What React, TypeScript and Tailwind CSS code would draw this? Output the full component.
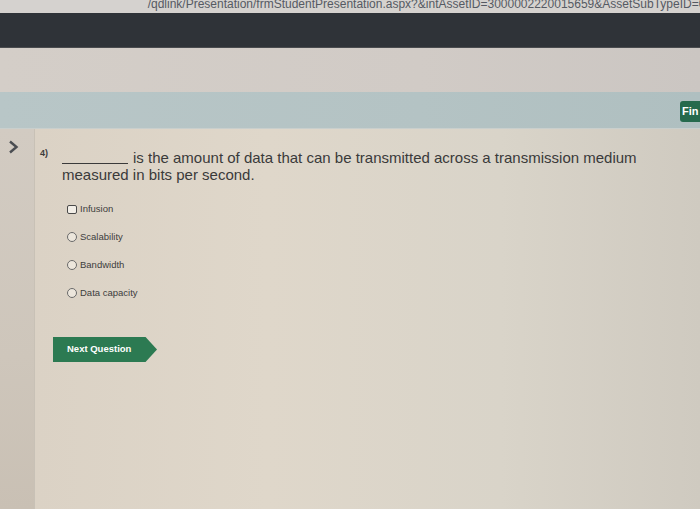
import React from 'react';

const options = [
  { label: 'Infusion', square: true },
  { label: 'Scalability', square: false },
  { label: 'Bandwidth', square: false },
  { label: 'Data capacity', square: false },
];

export default function App() {
  return (
    <div className="w-[700px] h-[509px] flex flex-col overflow-hidden font-['Liberation_Sans',Arial,sans-serif] bg-[#d8d1c6]">
      {/* address bar, cut off at the top edge of the photo */}
      <div className="h-[13px] shrink-0 overflow-hidden bg-[#d5d2cf] flex justify-end">
        <div className="-mt-[4px] text-[12px] leading-[16px] text-[#555a63] whitespace-nowrap mr-[-12px]">
          /qdlink/Presentation/frmStudentPresentation.aspx?&amp;intAssetID=3000002220015659&amp;AssetSubTypeID=08
        </div>
      </div>

      {/* dark header */}
      <div className="h-[35px] shrink-0 bg-[#2f3338] border-b border-[#4a4c4f]" />

      {/* light strip */}
      <div className="h-[44px] shrink-0 bg-[linear-gradient(90deg,#d4cec8,#d1cbc6_60%,#cbc6c2)]" />

      {/* title bar */}
      <div className="h-[37px] shrink-0 bg-[linear-gradient(90deg,#b8c6c7,#b4c3c4_60%,#afbfc0)] border-b border-[#c9cfcd] flex items-center justify-end">
        <div className="h-[21px] w-[20px] mt-[2px] rounded-l-[3px] bg-[#266a4d] text-white text-[11px] font-bold flex items-center pl-[2px] overflow-hidden whitespace-nowrap">
          Fin
        </div>
      </div>

      {/* body */}
      <div className="flex-1 flex min-h-0">
        <div className="w-[35px] shrink-0 bg-[linear-gradient(180deg,#d2cbc2,#cec6bb_60%,#c9c0b4)] border-r border-[#c8c1b6] pt-[11px] pl-[8px]">
          <svg width="11" height="14" viewBox="0 0 11 14" className="text-[#4a4d52]">
            <path d="M2 1.5 L8.5 7 L2 12.5" fill="none" stroke="currentColor" strokeWidth="2.4" strokeLinejoin="miter" />
          </svg>
        </div>

        <div className="flex-1 bg-[linear-gradient(90deg,#dbd2c5,#dfd7ca_35%,#d9d4c9_70%,#cfcac0)] pt-[20px]">
          <div className="flex">
            <div className="w-[27px] pl-[5px] -mt-[2px] text-[9px] font-bold text-[#3c3c3c]">4)</div>
            <div className="text-[15px] leading-[17px] text-[#3a3a3a]">
              <span className="inline-block w-[66px] border-b border-[#3a3a3a] align-[-1px] mr-[5px]" />
              is the amount of data that can be transmitted across a transmission medium
              <br />
              measured in bits per second.
            </div>
          </div>

          <div className="flex flex-col gap-[14px] pl-[32px] pt-[19px]">
            {options.map((o) => (
              <div key={o.label} className="flex items-center gap-[3px] h-[14px]">
                <span
                  className={
                    o.square
                      ? 'w-[10px] h-[9px] rounded-[2px] border-[1.5px] border-[#4a4a4a] bg-[#f2eee7]'
                      : 'w-[10px] h-[10px] rounded-full border border-[#6a6a6a] bg-[#ece6dc]'
                  }
                />
                <span className="text-[9.5px] text-[#3d3d3d]">{o.label}</span>
              </div>
            ))}
          </div>

          <div className="pl-[18px] pt-[37px]">
            <div className="w-[104px] h-[25px] bg-[#2c7a52] text-white text-[9.5px] font-bold flex items-center pl-[14px] [clip-path:polygon(0_0,89%_0,100%_50%,89%_100%,0_100%)]">
              Next Question
            </div>
          </div>
        </div>
      </div>
    </div>
  );
}
